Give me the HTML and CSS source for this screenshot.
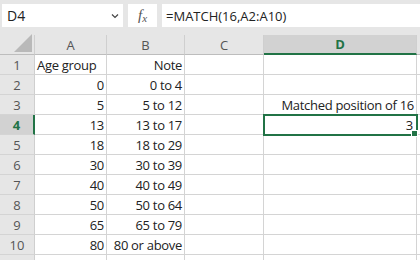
FILE: index.html
```html
<!DOCTYPE html>
<html>
<head>
<meta charset="utf-8">
<link rel="stylesheet" href="styles.css">
</head>
<body>
<div class="app">
  <div class="fbar">
    <div class="namebox"><span>D4</span><svg class="chev" width="8" height="6" viewBox="0 0 8 6"><path d="M1 1.5 L4 4.5 L7 1.5" fill="none" stroke="#444" stroke-width="1.2"/></svg></div>
    <div class="fx"><span class="f">f</span><span class="x">x</span></div>
    <div class="formula">=MATCH(16,A2:A10)</div>
  </div>
  <div class="sheet">
    <div class="corner"><svg width="18" height="18" viewBox="0 0 18 18"><polygon points="18,0 18,18 0,18" fill="#b9b9b9"/></svg></div>
    <div class="ch">A</div><div class="ch">B</div><div class="ch">C</div><div class="ch sel">D</div><div class="ch e"></div>

    <div class="rh">1</div><div class="c l">Age group</div><div class="c">Note</div><div class="c"></div><div class="c"></div><div class="c"></div>
    <div class="rh">2</div><div class="c">0</div><div class="c">0 to 4</div><div class="c"></div><div class="c"></div><div class="c"></div>
    <div class="rh">3</div><div class="c">5</div><div class="c">5 to 12</div><div class="c"></div><div class="c">Matched position of 16</div><div class="c"></div>
    <div class="rh sel">4</div><div class="c">13</div><div class="c">13 to 17</div><div class="c"></div><div class="c active">3<span class="handle"></span></div><div class="c"></div>
    <div class="rh">5</div><div class="c">18</div><div class="c">18 to 29</div><div class="c"></div><div class="c"></div><div class="c"></div>
    <div class="rh">6</div><div class="c">30</div><div class="c">30 to 39</div><div class="c"></div><div class="c"></div><div class="c"></div>
    <div class="rh">7</div><div class="c">40</div><div class="c">40 to 49</div><div class="c"></div><div class="c"></div><div class="c"></div>
    <div class="rh">8</div><div class="c">50</div><div class="c">50 to 64</div><div class="c"></div><div class="c"></div><div class="c"></div>
    <div class="rh">9</div><div class="c">65</div><div class="c">65 to 79</div><div class="c"></div><div class="c"></div><div class="c"></div>
    <div class="rh">10</div><div class="c">80</div><div class="c">80 or above</div><div class="c"></div><div class="c"></div><div class="c"></div>
    <div class="rh"></div><div class="c"></div><div class="c"></div><div class="c"></div><div class="c"></div><div class="c"></div>
  </div>
</div>
</body>
</html>
```
FILE: styles.css
```css
* { box-sizing: border-box; }
html, body { margin: 0; padding: 0; }
body {
  width: 420px;
  height: 260px;
  overflow: hidden;
  background: #e6e6e6;
  font-family: "Open Sans", "Noto Sans", sans-serif;
  color: #222;
}
.app { width: 420px; height: 260px; overflow: hidden; }
.fbar {
  display: flex;
  height: 35px;
  padding: 4px 0 0 2px;
  gap: 5px;
}
.namebox {
  width: 121px;
  height: 23px;
  background: #fff;
  display: flex;
  align-items: center;
  justify-content: space-between;
  padding: 0 4px 0 5px;
  font-size: 14px;
}
.chev { margin-top: 1px; }
.fx {
  width: 29px;
  height: 23px;
  background: #fff;
  display: flex;
  align-items: center;
  justify-content: center;
  font-family: "Liberation Serif", serif;
  font-style: italic;
  color: #555;
}
.fx .f { font-size: 15px; }
.fx .x { font-size: 11px; margin-top: 4px; }
.formula {
  flex: 1;
  height: 23px;
  background: #fff;
  padding: 0 0 0 4px;
  display: flex;
  align-items: center;
  font-size: 13px;
  color: #222;
}
.sheet {
  display: grid;
  grid-template-columns: 35px 72px 78px 79px 153px 3px;
  grid-template-rows: repeat(12, 20px);
  background: #fff;
}
.corner, .ch {
  background: #e6e6e6;
  border-right: 1px solid #cfcfcf;
  border-bottom: 1px solid #bdbdbd;
  font-size: 13px;
  color: #555;
  display: flex;
  align-items: center;
  justify-content: center;
}
.corner { justify-content: flex-end; align-items: flex-end; padding: 0 2px 2px 0; }
.ch.sel {
  background: #d2d2d2;
  color: #217346;
  font-weight: bold;
  border-bottom: 2px solid #217346;
}
.ch.e { border-right: none; }
.rh {
  background: #e6e6e6;
  border-right: 1px solid #cfcfcf;
  border-bottom: 1px solid #d4d4d4;
  font-size: 13px;
  color: #555;
  display: flex;
  align-items: center;
  justify-content: center;
}
.rh.sel {
  background: #d2d2d2;
  color: #217346;
  font-weight: bold;
  border-right: 2px solid #217346;
}
.c {
  border-right: 1px solid #d4d4d4;
  border-bottom: 1px solid #d4d4d4;
  font-size: 13px;
  letter-spacing: -0.3px;
  display: flex;
  align-items: center;
  justify-content: flex-end;
  padding: 0 2px 0 2px;
  white-space: nowrap;
  position: relative;
}
.c.l { justify-content: flex-start; }
.c.active {
  outline: 2px solid #217346;
  outline-offset: -1px;
  padding-right: 3px;
  z-index: 2;
}
.handle {
  position: absolute;
  right: -2px;
  bottom: -3px;
  width: 5px;
  height: 5px;
  background: #217346;
  border: 1px solid #fff;
  box-sizing: content-box;
}
```
